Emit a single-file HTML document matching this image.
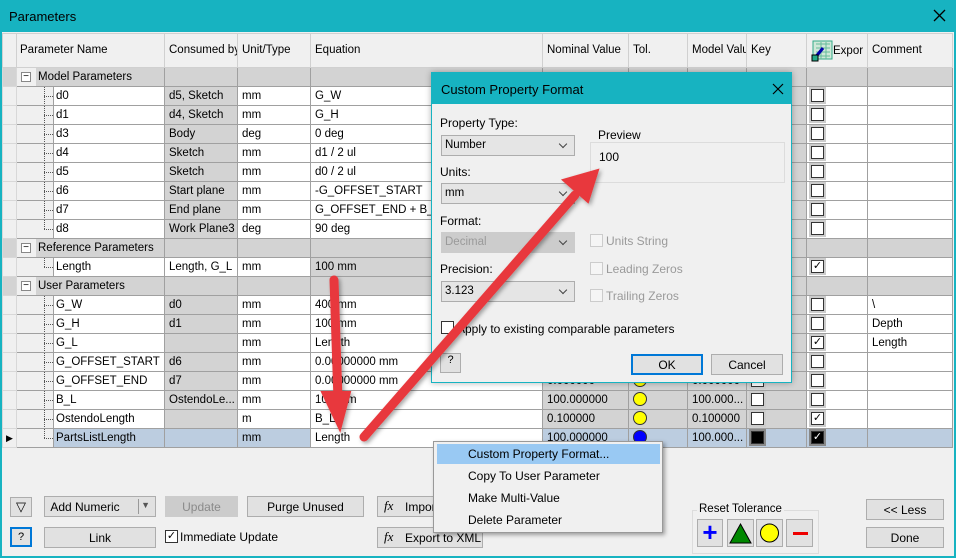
<!DOCTYPE html>
<html><head><meta charset="utf-8"><style>
*{box-sizing:border-box;margin:0;padding:0}
body{width:956px;height:558px;overflow:hidden;background:#f0f0f0;font-family:"Liberation Sans",Arial,sans-serif;font-size:12px;color:#000;position:relative}
.abs{position:absolute}
#frame{left:0;top:0;width:956px;height:558px;border:2px solid #17b3c1;border-top:none}
#title{left:0;top:0;width:956px;height:32px;background:#17b3c1;font-size:13px;padding:9px 0 0 9px}
table{position:absolute;left:2px;top:33px;width:950px;border-collapse:collapse;table-layout:fixed}
td{border:1px solid #a0a0a0;height:19px;padding:0 4px;white-space:nowrap;overflow:hidden;font-size:11.5px;vertical-align:middle;line-height:17px}
tr.h td{height:34px;background:#f0f0f0;border-color:#d0d0d0}
td.rh{background:#f0f0f0;border-color:#d8d8d8;padding:0}
td.nm{padding:0;position:relative;border-left:none}
.g td{background:#d3d3d3}
td.c{background:#d3d3d3}
td.w{background:#fff}
tr.sel td{background:#bccde0}
.box{position:absolute;left:4px;top:4px;width:10px;height:10px;border:1px solid #888;background:#fff;font-size:10px;line-height:8px;text-align:center}
.lbl{position:absolute;left:19px;top:0;right:0;height:18px;line-height:18px;padding:0 0 0 2px}
.chl{position:absolute;left:36px;top:0;right:0;height:18px;line-height:18px;padding:0 0 0 2px;background:#fff;border-left:1px solid #a0a0a0}
.vl{position:absolute;left:27px;top:-1px;bottom:-1px;border-left:1px dotted #555}
.hl{position:absolute;left:27px;width:9px;top:9px;border-top:1px dotted #555}
.cb{display:inline-block;width:13px;height:13px;border:1px solid #333;background:#fff;vertical-align:middle;box-shadow:0 0 0 2px #ccc;font-size:11px;line-height:11px;text-align:center}
.dot{display:inline-block;width:14px;height:14px;border-radius:50%;border:1px solid #333;background:#ff0;vertical-align:middle}
.btn{position:absolute;background:#e1e1e1;border:1px solid #adadad;text-align:center;font-size:12px}
#dlg{left:431px;top:72px;width:361px;height:311px;background:#f0f0f0;border:1px solid #17b3c1;box-shadow:0 0 6px rgba(0,0,0,.3)}
#dlg .t{left:0;top:0;width:359px;height:31px;background:#17b3c1;font-size:13px;padding:9px 0 0 9px}
.sel2{position:absolute;width:134px;height:21px;border:1px solid #adadad;background:#e5e5e5;padding:3px 0 0 3px;font-size:11.5px}
.sel2:after{content:"";position:absolute;right:8px;top:5px;width:5px;height:5px;border-right:1px solid #444;border-bottom:1px solid #444;transform:rotate(45deg)}
.dis{color:#9a9a9a}
.dcb{position:absolute;width:13px;height:13px;border:1px solid #ccc;background:#f5f5f5}
#menu{left:433px;top:441px;width:230px;height:92px;background:#f0f0f0;border:1px solid #999;box-shadow:2px 2px 4px rgba(0,0,0,.35)}
#menu div{position:absolute;left:34px;font-size:12px}
.x{font-family:"DejaVu Sans";font-weight:200}
</style></head><body>
<div id="frame" class="abs"></div>
<div id="title" class="abs">Parameters</div>
<svg class="abs" style="left:933px;top:9px" width="13" height="13"><path d="M1 1L12 12M12 1L1 12" stroke="#000" stroke-width="1.3"/></svg>

<table>
<colgroup><col style="width:14px"><col style="width:148px"><col style="width:73px"><col style="width:73px"><col style="width:232px"><col style="width:86px"><col style="width:59px"><col style="width:59px"><col style="width:60px"><col style="width:61px"><col style="width:85px"></colgroup>
<tr class="h"><td class="rh"></td><td style="padding-left:3px">Parameter Name</td><td>Consumed by</td><td>Unit/Type</td><td>Equation</td><td>Nominal Value</td><td>Tol.</td><td>Model Value</td><td>Key</td><td style="padding:0 0 0 4px"><svg width="22" height="22" style="vertical-align:middle" viewBox="0 0 22 22"><rect x="2" y="1" width="19" height="18" fill="#cfe8d8" stroke="#3a8"/><path d="M5 4h14M5 8h14M5 12h14M5 16h14M10 2v17M15 2v17" stroke="#6b9" stroke-width="1"/><path d="M3 19L12 8" stroke="#00a" stroke-width="3"/><rect x="1" y="15" width="6" height="6" fill="#2a8" stroke="#000"/></svg>Expor</td><td>Comment</td></tr>
<tr class="g"><td class="rh"></td><td class="nm" style="background:#f0f0f0"><div class="box">−</div><div class="lbl" style="background:#d3d3d3">Model Parameters</div></td><td></td><td></td><td></td><td></td><td></td><td></td><td></td><td></td><td></td></tr>
<tr><td class="rh"></td><td class="nm" style="background:#f0f0f0"><div class="vl"></div><div class="hl"></div><div class="chl">d0</div></td><td class="c">d5, Sketch</td><td class="w">mm</td><td class="w">G_W</td><td class="c"></td><td class="c"></td><td class="c"></td><td class="c"></td><td class="w"><span class="cb"></span></td><td class="w"></td></tr>
<tr><td class="rh"></td><td class="nm" style="background:#f0f0f0"><div class="vl"></div><div class="hl"></div><div class="chl">d1</div></td><td class="c">d4, Sketch</td><td class="w">mm</td><td class="w">G_H</td><td class="c"></td><td class="c"></td><td class="c"></td><td class="c"></td><td class="w"><span class="cb"></span></td><td class="w"></td></tr>
<tr><td class="rh"></td><td class="nm" style="background:#f0f0f0"><div class="vl"></div><div class="hl"></div><div class="chl">d3</div></td><td class="c">Body</td><td class="w">deg</td><td class="w">0 deg</td><td class="c"></td><td class="c"></td><td class="c"></td><td class="c"></td><td class="w"><span class="cb"></span></td><td class="w"></td></tr>
<tr><td class="rh"></td><td class="nm" style="background:#f0f0f0"><div class="vl"></div><div class="hl"></div><div class="chl">d4</div></td><td class="c">Sketch</td><td class="w">mm</td><td class="w">d1 / 2 ul</td><td class="c"></td><td class="c"></td><td class="c"></td><td class="c"></td><td class="w"><span class="cb"></span></td><td class="w"></td></tr>
<tr><td class="rh"></td><td class="nm" style="background:#f0f0f0"><div class="vl"></div><div class="hl"></div><div class="chl">d5</div></td><td class="c">Sketch</td><td class="w">mm</td><td class="w">d0 / 2 ul</td><td class="c"></td><td class="c"></td><td class="c"></td><td class="c"></td><td class="w"><span class="cb"></span></td><td class="w"></td></tr>
<tr><td class="rh"></td><td class="nm" style="background:#f0f0f0"><div class="vl"></div><div class="hl"></div><div class="chl">d6</div></td><td class="c">Start plane</td><td class="w">mm</td><td class="w">-G_OFFSET_START</td><td class="c"></td><td class="c"></td><td class="c"></td><td class="c"></td><td class="w"><span class="cb"></span></td><td class="w"></td></tr>
<tr><td class="rh"></td><td class="nm" style="background:#f0f0f0"><div class="vl"></div><div class="hl"></div><div class="chl">d7</div></td><td class="c">End plane</td><td class="w">mm</td><td class="w">G_OFFSET_END + B_L</td><td class="c"></td><td class="c"></td><td class="c"></td><td class="c"></td><td class="w"><span class="cb"></span></td><td class="w"></td></tr>
<tr><td class="rh"></td><td class="nm" style="background:#f0f0f0"><div class="vl" style="bottom:9px"></div><div class="hl"></div><div class="chl">d8</div></td><td class="c">Work Plane3</td><td class="w">deg</td><td class="w">90 deg</td><td class="c"></td><td class="c"></td><td class="c"></td><td class="c"></td><td class="w"><span class="cb"></span></td><td class="w"></td></tr>
<tr class="g"><td class="rh"></td><td class="nm" style="background:#f0f0f0"><div class="box">−</div><div class="lbl" style="background:#d3d3d3">Reference Parameters</div></td><td></td><td></td><td></td><td></td><td></td><td></td><td></td><td></td><td></td></tr>
<tr><td class="rh"></td><td class="nm" style="background:#f0f0f0"><div class="vl" style="bottom:9px"></div><div class="hl"></div><div class="chl">Length</div></td><td class="w">Length, G_L</td><td class="w">mm</td><td class="c">100 mm</td><td class="c"></td><td class="c"></td><td class="c"></td><td class="c"></td><td class="w"><span class="cb">✓</span></td><td class="w"></td></tr>
<tr class="g"><td class="rh"></td><td class="nm" style="background:#f0f0f0"><div class="box">−</div><div class="lbl" style="background:#d3d3d3">User Parameters</div></td><td></td><td></td><td></td><td></td><td></td><td></td><td></td><td></td><td></td></tr>
<tr><td class="rh"></td><td class="nm" style="background:#f0f0f0"><div class="vl"></div><div class="hl"></div><div class="chl">G_W</div></td><td class="c">d0</td><td class="w">mm</td><td class="w">400 mm</td><td class="c"></td><td class="c"></td><td class="c"></td><td class="c"></td><td class="w"><span class="cb"></span></td><td class="w">\ </td></tr>
<tr><td class="rh"></td><td class="nm" style="background:#f0f0f0"><div class="vl"></div><div class="hl"></div><div class="chl">G_H</div></td><td class="c">d1</td><td class="w">mm</td><td class="w">100 mm</td><td class="c"></td><td class="c"></td><td class="c"></td><td class="c"></td><td class="w"><span class="cb"></span></td><td class="w">Depth</td></tr>
<tr><td class="rh"></td><td class="nm" style="background:#f0f0f0"><div class="vl"></div><div class="hl"></div><div class="chl">G_L</div></td><td class="c"></td><td class="w">mm</td><td class="w">Length</td><td class="c"></td><td class="c"></td><td class="c"></td><td class="c"></td><td class="w"><span class="cb">✓</span></td><td class="w">Length</td></tr>
<tr><td class="rh"></td><td class="nm" style="background:#f0f0f0"><div class="vl"></div><div class="hl"></div><div class="chl">G_OFFSET_START</div></td><td class="c">d6</td><td class="w">mm</td><td class="w">0.00000000 mm</td><td class="c"></td><td class="c"></td><td class="c"></td><td class="c"></td><td class="w"><span class="cb"></span></td><td class="w"></td></tr>
<tr><td class="rh"></td><td class="nm" style="background:#f0f0f0"><div class="vl"></div><div class="hl"></div><div class="chl">G_OFFSET_END</div></td><td class="c">d7</td><td class="w">mm</td><td class="w">0.00000000 mm</td><td class="c">0.000000</td><td class="c"><span class="dot"></span></td><td class="c">0.000000</td><td class="c"><span class="cb"></span></td><td class="w"><span class="cb"></span></td><td class="w"></td></tr>
<tr><td class="rh"></td><td class="nm" style="background:#f0f0f0"><div class="vl"></div><div class="hl"></div><div class="chl">B_L</div></td><td class="c">OstendoLe...</td><td class="w">mm</td><td class="w">100 mm</td><td class="c">100.000000</td><td class="c"><span class="dot"></span></td><td class="c">100.000...</td><td class="c"><span class="cb"></span></td><td class="w"><span class="cb"></span></td><td class="w"></td></tr>
<tr><td class="rh"></td><td class="nm" style="background:#f0f0f0"><div class="vl"></div><div class="hl"></div><div class="chl">OstendoLength</div></td><td class="c"></td><td class="w">m</td><td class="w">B_L</td><td class="c">0.100000</td><td class="c"><span class="dot"></span></td><td class="c">0.100000</td><td class="c"><span class="cb"></span></td><td class="w"><span class="cb">✓</span></td><td class="w"></td></tr>
<tr class="sel"><td class="rh" style="background:#f0f0f0;font-size:9px;padding-left:3px">▶</td><td class="nm" style="background:#f0f0f0"><div class="vl" style="bottom:9px"></div><div class="hl"></div><div class="chl" style="background:#bccde0">PartsListLength</div></td><td></td><td>mm</td><td style="background:#fff">Length</td><td>100.000000</td><td><span class="dot" style="background:#00f"></span></td><td>100.000...</td><td><span class="cb" style="background:#000;box-shadow:0 0 0 2px #888"></span></td><td><span class="cb" style="background:#000;color:#fff;box-shadow:0 0 0 2px #888">✓</span></td><td></td></tr>
</table>

<!-- dialog -->
<div id="dlg" class="abs">
<div class="t abs">Custom Property Format</div>
<svg class="abs" style="left:340px;top:10px" width="12" height="12"><path d="M1 1L11 11M11 1L1 11" stroke="#000" stroke-width="1.2"/></svg>
<div class="abs" style="left:8px;top:43px">Property Type:</div>
<div class="sel2" style="left:9px;top:62px">Number</div>
<div class="abs" style="left:8px;top:92px">Units:</div>
<div class="sel2" style="left:9px;top:110px">mm</div>
<div class="abs" style="left:8px;top:141px">Format:</div>
<div class="sel2 dis" style="left:9px;top:159px;background:#ccc;border-color:#ccc">Decimal</div>
<div class="abs" style="left:8px;top:189px">Precision:</div>
<div class="sel2" style="left:9px;top:208px">3.123</div>
<div class="abs" style="left:158px;top:69px;width:195px;height:41px;border:1px solid #dcdcdc"></div>
<div class="abs" style="left:164px;top:55px;background:#f0f0f0;padding:0 2px">Preview</div>
<div class="abs" style="left:167px;top:77px">100</div>
<div class="dcb" style="left:158px;top:161px"></div><div class="abs dis" style="left:174px;top:161px">Units String</div>
<div class="dcb" style="left:158px;top:189px"></div><div class="abs dis" style="left:174px;top:189px">Leading Zeros</div>
<div class="dcb" style="left:158px;top:216px"></div><div class="abs dis" style="left:174px;top:216px">Trailing Zeros</div>
<div class="dcb" style="left:9px;top:248px;border-color:#333;background:#fff"></div><div class="abs" style="left:25px;top:249px">Apply to existing comparable parameters</div>
<div class="btn" style="left:8px;top:280px;width:21px;height:20px;font-size:11px">?</div>
<div class="btn" style="left:199px;top:281px;width:72px;height:21px;border:2px solid #0078d7;padding-top:2px">OK</div>
<div class="btn" style="left:279px;top:281px;width:72px;height:21px;padding-top:3px">Cancel</div>
</div>

<!-- arrows -->
<svg class="abs" style="left:0;top:0" width="956" height="558">
<defs><filter id="sh"><feDropShadow dx="2" dy="2" stdDeviation="2" flood-opacity=".35"/></filter></defs>
<g filter="url(#sh)" fill="#e8393c" stroke="#e8393c" stroke-linecap="round">
<path d="M334 280 L338 400" stroke-width="9" fill="none"/>
<path d="M322 392 L350 392 L340 430 Z" stroke-width="2"/>
<path d="M364 437 L575 195" stroke-width="9" fill="none"/>
<path d="M563 180 L598 170 L588 202 Z" stroke-width="2"/>
</g></svg>

<!-- bottom buttons -->
<div class="btn" style="left:10px;top:497px;width:22px;height:20px;font-size:13px;line-height:17px">▽</div>
<div class="btn" style="left:10px;top:527px;width:22px;height:20px;border:2px solid #0078d7;font-size:11px;line-height:16px">?</div>
<div class="btn" style="left:44px;top:496px;width:112px;height:21px;padding:3px 30px 0 0">Add Numeric<span style="position:absolute;left:93px;top:2px;height:15px;border-left:1px solid #999"></span><span style="position:absolute;right:5px;top:3px;font-size:9px;color:#555">▼</span></div>
<div class="btn" style="left:165px;top:496px;width:73px;height:21px;padding-top:3px;background:#ccc;border-color:#ccc;color:#8a8a8a">Update</div>
<div class="btn" style="left:247px;top:496px;width:117px;height:21px;padding-top:3px">Purge Unused</div>
<div class="btn" style="left:377px;top:496px;width:60px;height:21px;padding:3px 0 0 27px;text-align:left"><i style="position:absolute;left:6px;top:1px;font-family:'Liberation Serif';font-size:13px">fx</i>Impor</div>
<div class="btn" style="left:44px;top:527px;width:112px;height:21px;padding-top:3px">Link</div>
<div class="abs" style="left:165px;top:530px;width:13px;height:13px;border:1px solid #333;background:#fff;font-size:11px;line-height:11px;text-align:center">✓</div>
<div class="abs" style="left:180px;top:530px">Immediate Update</div>
<div class="btn" style="left:377px;top:527px;width:106px;height:21px;padding:3px 0 0 27px;text-align:left"><i style="position:absolute;left:6px;top:1px;font-family:'Liberation Serif';font-size:13px">fx</i>Export to XML</div>

<div id="menu" class="abs">
<div style="left:3px;top:2px;width:223px;height:20px;background:#99c9f3"></div>
<div style="top:5px">Custom Property Format...</div>
<div style="top:27px">Copy To User Parameter</div>
<div style="top:49px">Make Multi-Value</div>
<div style="top:71px">Delete Parameter</div>
</div>

<div class="abs" style="left:692px;top:510px;width:127px;height:44px;border:1px solid #dcdcdc"></div>
<div class="abs" style="left:697px;top:503px;background:#f0f0f0;padding:0 2px;font-size:11.5px">Reset Tolerance</div>
<div class="btn" style="left:697px;top:519px;width:26px;height:28px;color:#00f;font-size:26px;line-height:24px;font-weight:bold">+</div>
<div class="btn" style="left:727px;top:519px;width:27px;height:28px"><svg width="25" height="26"><path d="M12.5 4L23 23H2Z" fill="#080" stroke="#000"/></svg></div>
<div class="btn" style="left:756px;top:519px;width:27px;height:28px"><svg width="25" height="26"><circle cx="12.5" cy="13" r="9" fill="#ff0" stroke="#000"/></svg></div>
<div class="btn" style="left:786px;top:519px;width:27px;height:28px"><div style="position:absolute;left:6px;top:12px;width:15px;height:3px;background:#e00"></div></div>
<div class="btn" style="left:866px;top:499px;width:78px;height:21px;padding-top:3px">&lt;&lt; Less</div>
<div class="btn" style="left:866px;top:527px;width:78px;height:21px;padding-top:3px">Done</div>
</body></html>
